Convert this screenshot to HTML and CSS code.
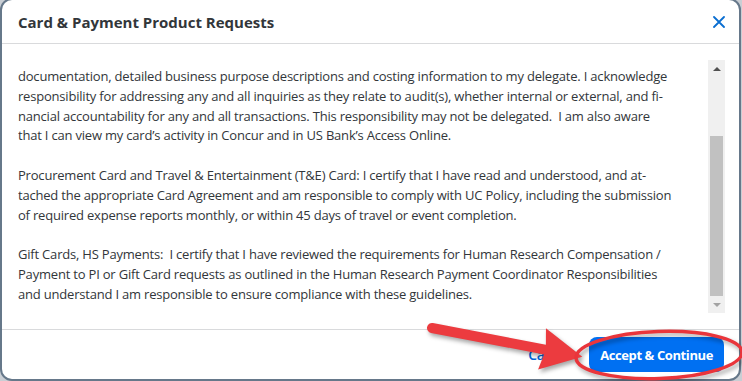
FILE: index.html
```html
<!DOCTYPE html>
<html lang="en">
<head>
  <meta charset="UTF-8" />
  <title>Card &amp; Payment Product Requests</title>
  <link rel="stylesheet" href="styles.css">
</head>
<body>
  <div class="dialog">
    <div class="dialog-header">
      <h1>Card &amp; Payment Product Requests</h1>
      <button class="close" aria-label="Close">
        <svg width="12" height="12" viewBox="0 0 12 12"><path d="M1 1L11 11M11 1L1 11" stroke="#0a6ed1" stroke-width="1.8" stroke-linecap="round"/></svg>
      </button>
    </div>

    <div class="dialog-body">
      <div class="terms">
        <div class="terms-text">
          <p>Delegates: I understand that if I assign a delegate in Concur to prepare my expense reports,<br>
          I remain fully responsible for the accuracy of every transaction and for providing supporting<br>
          documentation, detailed business purpose descriptions and costing information to my delegate. I acknowledge<br>
          responsibility for addressing any and all inquiries as they relate to audit(s), whether internal or external, and fi-<br>
          nancial accountability for any and all transactions. This responsibility may not be delegated.&nbsp; I am also aware<br>
          that I can view my card’s activity in Concur and in US Bank’s Access Online.</p>
          <p>Procurement Card and Travel &amp; Entertainment (T&amp;E) Card: I certify that I have read and understood, and at-<br>
          tached the appropriate Card Agreement and am responsible to comply with UC Policy, including the submission<br>
          of required expense reports monthly, or within 45 days of travel or event completion.</p>
          <p>Gift Cards, HS Payments:&nbsp; I certify that I have reviewed the requirements for Human Research Compensation /<br>
          Payment to PI or Gift Card requests as outlined in the Human Research Payment Coordinator Responsibilities<br>
          and understand I am responsible to ensure compliance with these guidelines.</p>
        </div>
      </div>
      <div class="scrollbar">
        <span class="sb-btn up"></span>
        <div class="sb-track"><div class="sb-thumb"></div></div>
        <span class="sb-btn down"></span>
      </div>
    </div>

    <div class="dialog-footer">
      <a class="cancel" href="#">Cancel</a>
      <button class="primary">Accept &amp; Continue</button>
    </div>
  </div>

  <!-- red markup drawn over the screenshot -->
  <svg class="markup" width="742" height="381" viewBox="0 0 742 381">
    <g transform="translate(432 328) rotate(10.8)">
      <path d="M0 -5 L115 -5 L112 -21 L153 0 L112 21 L115 5 L0 5 A5 5 0 0 1 0 -5 Z" fill="#ec3b3f"/>
    </g>
    <ellipse cx="659" cy="355" rx="83" ry="23.5" transform="rotate(-2 659 355)" fill="none" stroke="#e9353b" stroke-width="3.5"/>
  </svg>
</body>
</html>
```

FILE: styles.css
```css
body {
  margin: 0;
  background: #c9ced4;
  font-family: 'Open Sans', 'Noto Sans', sans-serif;
  overflow: hidden;
  position: relative;
}
.dialog {
  width: 741px;
  height: 383px;
  margin-top: -2px;
  box-sizing: border-box;
  border: 2px solid #66788a;
  border-radius: 12px;
  background: #fff;
  display: flex;
  flex-direction: column;
  overflow: hidden;
}
.dialog-header {
  flex: none;
  display: flex;
  align-items: center;
  justify-content: space-between;
  padding: 1px 14px 0 16px;
  box-sizing: border-box;
  border-bottom: 1px solid #d9dadc;
  height: 44px;
}
.dialog-header h1 {
  margin: 0;
  font-size: 15px;
  font-weight: 700;
  color: #32363a;
}
.close {
  border: none;
  background: none;
  padding: 0;
  width: 12px;
  height: 12px;
  display: flex;
  cursor: pointer;
}
.dialog-body {
  flex: none;
  display: flex;
  align-items: flex-start;
  padding: 16px 14px 16px 16px;
  border-bottom: 1px solid #d9dadc;
}
.terms {
  flex: 1;
  margin-top: 4px;
  height: 249px;
  overflow: hidden;
}
.terms-text {
  margin-top: -36.5px;
  font-size: 13px;
  line-height: 19.8px;
  letter-spacing: -0.2px;
  color: #32363a;
  white-space: nowrap;
}
.terms-text p {
  margin: 0 0 19.8px;
}
.scrollbar {
  width: 17px;
  height: 253px;
  background: #f0f0f0;
  display: flex;
  flex-direction: column;
}
.sb-btn {
  height: 17px;
  flex: none;
  display: flex;
  align-items: center;
  justify-content: center;
}
.sb-btn::before {
  content: '';
  border-left: 4px solid transparent;
  border-right: 4px solid transparent;
}
.sb-btn.up::before {
  border-bottom: 4px solid #505050;
}
.sb-btn.down::before {
  border-top: 4px solid #a3a3a3;
}
.sb-track {
  flex: 1;
  display: flex;
  flex-direction: column;
  justify-content: flex-end;
  padding: 0 2px;
}
.sb-thumb {
  height: 160px;
  background: #c1c1c1;
}
.dialog-footer {
  flex: 1;
  display: flex;
  align-items: center;
  justify-content: flex-end;
  gap: 18px;
  padding-right: 15px;
}
.cancel {
  color: #0064d9;
  font-size: 14px;
  font-weight: 600;
  letter-spacing: -0.3px;
  text-decoration: none;
}
.primary {
  height: 35px;
  padding: 0 11px;
  border: none;
  border-radius: 8px;
  background: #0070f2;
  color: #fff;
  font-family: inherit;
  font-size: 13px;
  font-weight: 700;
  letter-spacing: -0.4px;
  cursor: pointer;
}
.markup {
  position: absolute;
  top: 0;
  left: 0;
  pointer-events: none;
  filter: drop-shadow(2px 3px 2px rgba(0, 0, 0, 0.35));
}
```
